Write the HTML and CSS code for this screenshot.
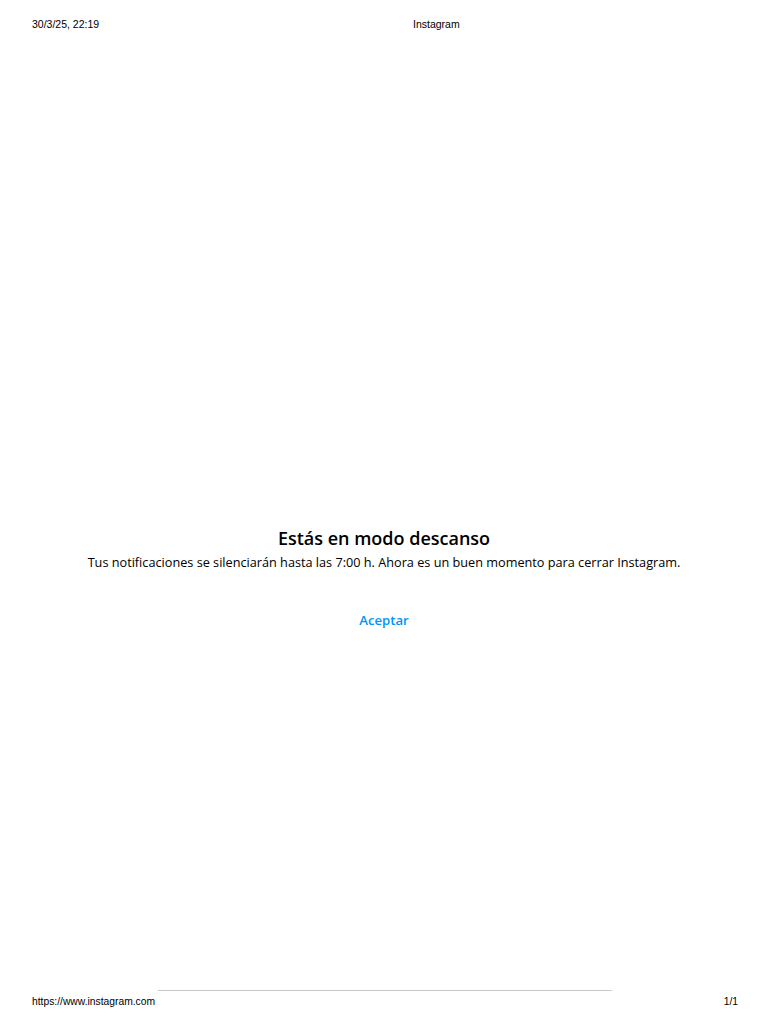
FILE: index.html
```html
<!DOCTYPE html>
<html lang="es">
<head>
<meta charset="utf-8">
<title>Instagram</title>
<link rel="stylesheet" href="styles.css">
</head>
<body>
<div class="page">
  <header class="print-head">
    <span class="date">30/3/25, 22:19</span>
    <span class="title">Instagram</span>
  </header>
  <main class="content">
    <div class="dialog">
      <h1 class="heading">Estás en modo descanso</h1>
      <p class="message">Tus notificaciones se silenciarán hasta las 7:00 h. Ahora es un buen momento para cerrar Instagram.</p>
      <button class="accept">Aceptar</button>
    </div>
  </main>
  <div class="rule-wrap"><div class="rule"></div></div>
  <footer class="print-foot">
    <span>https://www.instagram.com</span>
    <span>1/1</span>
  </footer>
</div>
</body>
</html>
```
FILE: styles.css
```css
html, body {
  margin: 0;
  padding: 0;
  background: #ffffff;
}
.page {
  width: 768px;
  height: 1024px;
  display: flex;
  flex-direction: column;
  font-family: "Liberation Sans", Arial, sans-serif;
  color: #000;
}
.print-head {
  display: flex;
  align-items: center;
  height: 14px;
  padding: 17px 0 0 32px;
  font-size: 10.5px;
}
.print-head .date {
  width: 381px;
}
.print-head .title {
  display: block;
}
.content {
  flex: 1;
  display: flex;
  flex-direction: column;
  align-items: center;
  padding-top: 495px;
}
.dialog {
  display: flex;
  flex-direction: column;
  align-items: center;
  font-family: "Open Sans", "Noto Sans", sans-serif;
}
.heading {
  margin: 0;
  font-size: 18px;
  font-weight: 600;
  color: #000;
  line-height: 24px;
}
.message {
  margin: 3px 0 0 0;
  font-size: 12.7px;
  line-height: 18px;
  color: #000;
}
.accept {
  margin-top: 40px;
  border: 0;
  background: none;
  padding: 0;
  font-family: inherit;
  font-size: 13.2px;
  font-weight: 600;
  color: #0095f6;
  line-height: 18px;
  cursor: pointer;
}
.rule-wrap {
  display: flex;
  justify-content: flex-start;
  padding-left: 158px;
}
.rule {
  width: 454px;
  height: 1px;
  background: #c8c8c8;
}
.print-foot {
  display: flex;
  justify-content: space-between;
  padding: 5px 30px 16px 32px;
  font-size: 10.3px;
  line-height: 12px;
}
```
